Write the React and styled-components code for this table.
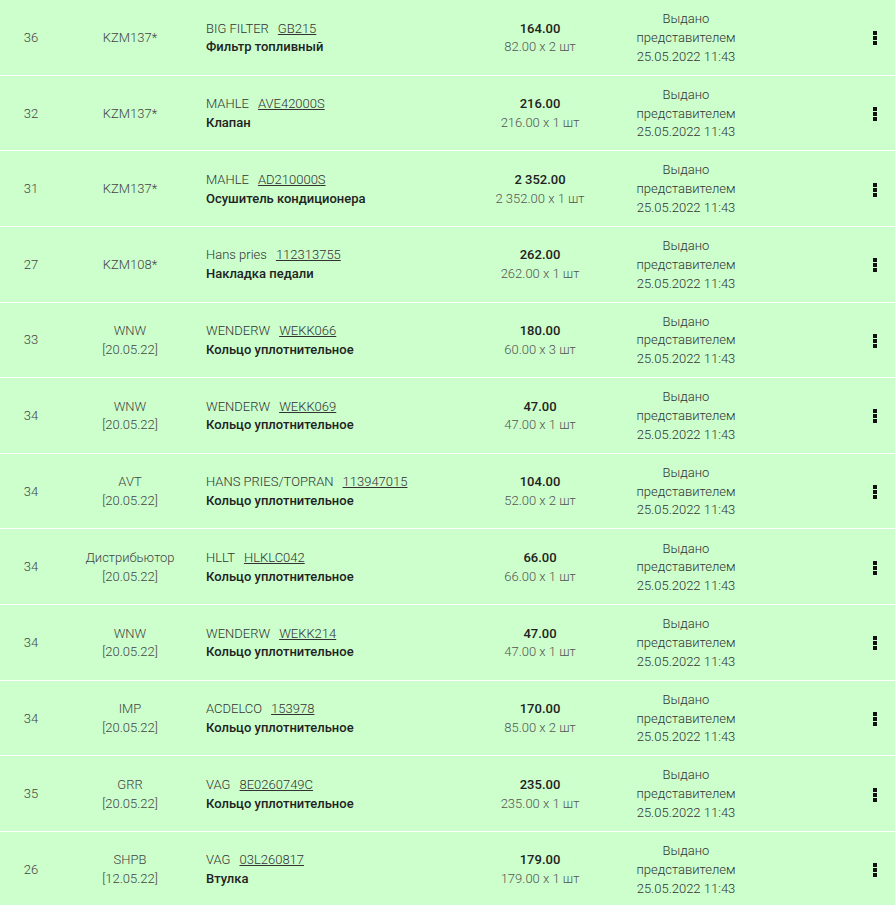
import styled, { createGlobalStyle } from 'styled-components';

const GlobalStyle = createGlobalStyle`
	html, body {
		margin: 0;
		padding: 0;
		background: #ccffcc;
	}
	body {
		font-family: Roboto, "Liberation Sans", sans-serif;
		font-size: 13px;
		color: #333;
	}
`;

const rows = [
	{ n: 36, wh: 'KZM137*', brand: 'BIG FILTER', code: 'GB215', name: 'Фильтр топливный', sum: '164.00', per: '82.00 x 2 шт' },
	{ n: 32, wh: 'KZM137*', brand: 'MAHLE', code: 'AVE42000S', name: 'Клапан', sum: '216.00', per: '216.00 x 1 шт' },
	{ n: 31, wh: 'KZM137*', brand: 'MAHLE', code: 'AD210000S', name: 'Осушитель кондиционера', sum: '2 352.00', per: '2 352.00 x 1 шт' },
	{ n: 27, wh: 'KZM108*', brand: 'Hans pries', code: '112313755', name: 'Накладка педали', sum: '262.00', per: '262.00 x 1 шт' },
	{ n: 33, wh: 'WNW', date: '20.05.22', brand: 'WENDERW', code: 'WEKK066', name: 'Кольцо уплотнительное', sum: '180.00', per: '60.00 x 3 шт' },
	{ n: 34, wh: 'WNW', date: '20.05.22', brand: 'WENDERW', code: 'WEKK069', name: 'Кольцо уплотнительное', sum: '47.00', per: '47.00 x 1 шт' },
	{ n: 34, wh: 'AVT', date: '20.05.22', brand: 'HANS PRIES/TOPRAN', code: '113947015', name: 'Кольцо уплотнительное', sum: '104.00', per: '52.00 x 2 шт' },
	{ n: 34, wh: 'Дистрибьютор', date: '20.05.22', brand: 'HLLT', code: 'HLKLC042', name: 'Кольцо уплотнительное', sum: '66.00', per: '66.00 x 1 шт' },
	{ n: 34, wh: 'WNW', date: '20.05.22', brand: 'WENDERW', code: 'WEKK214', name: 'Кольцо уплотнительное', sum: '47.00', per: '47.00 x 1 шт' },
	{ n: 34, wh: 'IMP', date: '20.05.22', brand: 'ACDELCO', code: '153978', name: 'Кольцо уплотнительное', sum: '170.00', per: '85.00 x 2 шт' },
	{ n: 35, wh: 'GRR', date: '20.05.22', brand: 'VAG', code: '8E0260749C', name: 'Кольцо уплотнительное', sum: '235.00', per: '235.00 x 1 шт' },
	{ n: 26, wh: 'SHPB', date: '12.05.22', brand: 'VAG', code: '03L260817', name: 'Втулка', sum: '179.00', per: '179.00 x 1 шт' },
];

const Table = styled.div`
	width: 895px;
`;

const Row = styled.div`
	display: grid;
	grid-template-columns: 62px 136px 277px 130px 162px 1fr;
	align-items: center;
	padding: 10.2px 0 8.2px;
	border-bottom: 1px solid #ffffff;
	line-height: 18.75px;
`;

const Cell = styled.div`
	text-align: ${(p) => p.$align || 'left'};
	color: ${(p) => p.$color || '#333'};
	font-weight: 300;
	padding-left: ${(p) => p.$pl || 0}px;
`;

const Strong = styled.div`
	font-weight: 500;
	color: #222;
`;

const Light = styled.div`
	font-weight: 300;
	color: #555;
`;

const Code = styled.a`
	color: #333;
	text-decoration: underline;
	margin-left: 9px;
	cursor: pointer;
`;

const Menu = styled.div`
	display: flex;
	justify-content: flex-end;
	padding-right: 18px;
`;

const Dots = styled.span`
	display: flex;
	flex-direction: column;
	gap: 1px;

	i {
		display: block;
		width: 4px;
		height: 4px;
		background: #111;
	}
`;

export default function App() {
	return (
		<>
			<GlobalStyle />
			<Table>
				{rows.map((r, i) => (
					<Row key={i}>
						<Cell $align="center" $color="#444">{r.n}</Cell>
						<Cell $align="center" $color="#444">
							<div>{r.wh}</div>
							{r.date && <div>[{r.date}]</div>}
						</Cell>
						<Cell $pl={8}>
							<div>
								{r.brand}
								<Code>{r.code}</Code>
							</div>
							<Strong>{r.name}</Strong>
						</Cell>
						<Cell $align="center">
							<Strong>{r.sum}</Strong>
							<Light>{r.per}</Light>
						</Cell>
						<Cell $align="center" $color="#333">
							<div>Выдано</div>
							<div>представителем</div>
							<div>25.05.2022 11:43</div>
						</Cell>
						<Menu>
							<Dots><i /><i /><i /></Dots>
						</Menu>
					</Row>
				))}
			</Table>
		</>
	);
}
